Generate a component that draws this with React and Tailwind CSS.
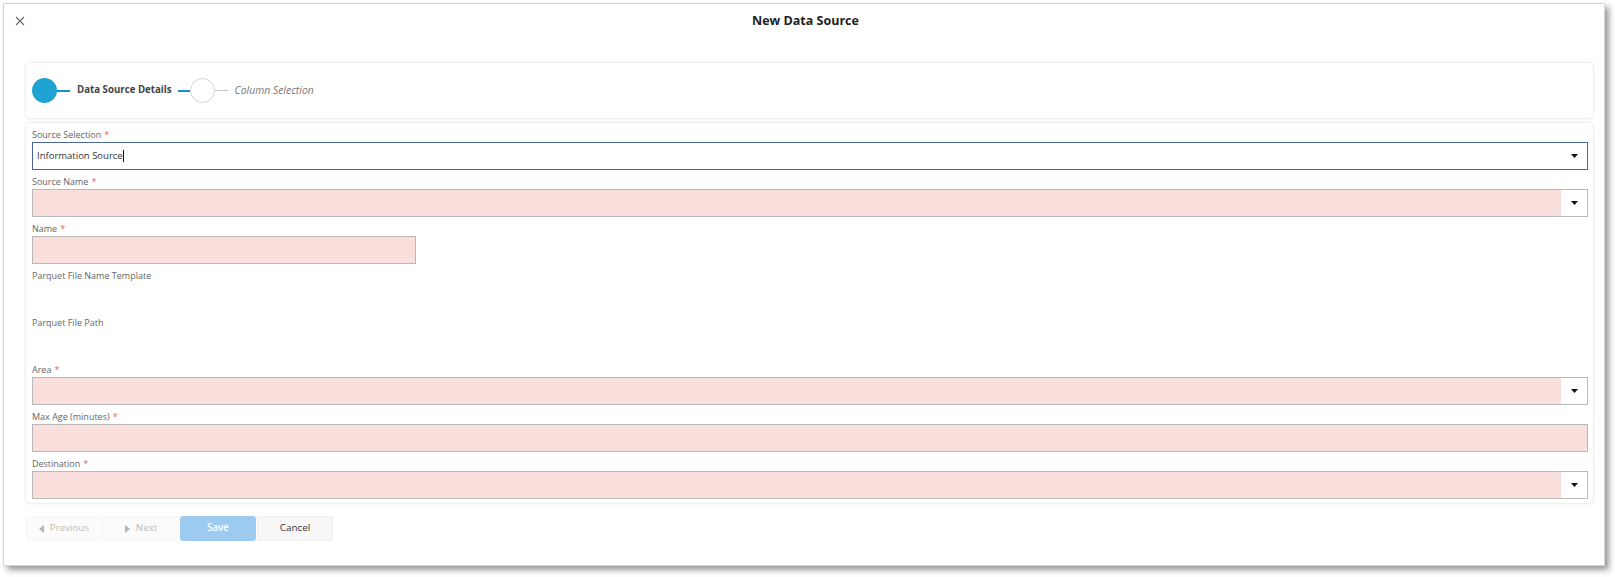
import React from 'react'

const Caret = () => (
  <svg width="7" height="4" viewBox="0 0 7 4">
    <path d="M0 0 L7 0 L3.5 4 Z" fill="#111" />
  </svg>
)

const Label = ({ text, required }) => (
  <div className="h-[15px] leading-[15px] text-[9px] text-[#666]">
    {text}
    {required && <span className="text-[#e8605a] ml-[3px]">*</span>}
  </div>
)

const PinkInput = ({ dropdown, width }) => (
  <div className={`h-[28px] flex border border-[#b9b9b9] bg-[#f9dfdc] mb-[4px] ${width || 'w-full'}`}>
    <div className="flex-1" />
    {dropdown && (
      <div className="w-[26px] bg-white flex items-center justify-center">
        <Caret />
      </div>
    )}
  </div>
)

const App = () => {
  return (
    <div className="w-[1615px] h-[577px] bg-white pt-[3px] pl-[3px]" style={{ fontFamily: '"Open Sans", "Liberation Sans", sans-serif' }}>
      <div className="w-[1602px] h-[563px] bg-white border border-[#d6d6d6] shadow-[4px_4px_6px_rgba(0,0,0,0.4)] flex flex-col">
        {/* Header */}
        <div className="relative h-[34px] flex items-center justify-center">
          <button className="absolute left-[11px] top-[12px] w-[10px] h-[10px]">
            <svg width="10" height="10" viewBox="0 0 10 10">
              <path d="M1 1 L9 9 M9 1 L1 9" stroke="#666" strokeWidth="1.1" />
            </svg>
          </button>
          <h1 className="text-[12.5px] font-bold text-[#222] ml-[3px]">New Data Source</h1>
        </div>

        <div className="pl-[22px] pr-[11px] mt-[25px]">
          {/* Stepper */}
          <div className="h-[55px] rounded-[4px] bg-white shadow-[0_0_3px_rgba(0,0,0,0.18)] flex items-center pl-[6px]">
            <div className="w-[25px] h-[25px] rounded-full bg-[#1fa3d3]" />
            <div className="w-[13px] h-[2px] bg-[#1b8ecf]" />
            <span className="ml-[7px] text-[9.7px] font-bold text-[#444]">Data Source Details</span>
            <div className="ml-[6px] w-[12px] h-[2px] bg-[#1b8ecf]" />
            <div className="w-[25px] h-[25px] rounded-full bg-white border border-[#d6d6d6]" />
            <div className="w-[13px] h-[1px] bg-[#c4c4c4]" />
            <span className="ml-[7px] text-[10.4px] italic text-[#777]">Column Selection</span>
          </div>

          {/* Form */}
          <div className="mt-[5px] h-[380px] rounded-[4px] bg-white shadow-[0_0_3px_rgba(0,0,0,0.18)] pt-[4px] pl-[6px] pr-[5px]">
            <Label text="Source Selection" required />
            <div className="h-[28px] flex items-center border border-[#4a6697] bg-white mb-[4px]">
              <div className="flex-1 flex items-center pl-[4px] text-[9.5px] text-[#333]">
                Information Source
                <span className="inline-block w-[1px] h-[12px] bg-[#111]" />
              </div>
              <div className="w-[26px] flex items-center justify-center">
                <Caret />
              </div>
            </div>

            <Label text="Source Name" required />
            <PinkInput dropdown />

            <Label text="Name" required />
            <PinkInput width="w-[384px]" />

            <Label text="Parquet File Name Template" />
            <div className="h-[28px] mb-[4px]" />

            <Label text="Parquet File Path" />
            <div className="h-[28px] mb-[4px]" />

            <Label text="Area" required />
            <PinkInput dropdown />

            <Label text="Max Age (minutes)" required />
            <PinkInput />

            <Label text="Destination" required />
            <PinkInput dropdown />
          </div>

          {/* Buttons */}
          <div className="mt-[13px] flex gap-[1px] text-[9.8px]">
            <button className="w-[76px] h-[25px] bg-[#fbfbfb] border border-[#f6f6f6] rounded-[2px] text-[#bdbdbd] flex items-center justify-center gap-[6px]">
              <svg width="5" height="8" viewBox="0 0 5 8"><path d="M5 0 L5 8 L0 4 Z" fill="#b5b5b5" /></svg>
              Previous
            </button>
            <button className="w-[76px] h-[25px] bg-[#fbfbfb] border border-[#f6f6f6] rounded-[2px] text-[#bdbdbd] flex items-center justify-center gap-[6px]">
              <svg width="5" height="8" viewBox="0 0 5 8"><path d="M0 0 L0 8 L5 4 Z" fill="#b5b5b5" /></svg>
              Next
            </button>
            <button className="w-[76px] h-[25px] bg-[#9dcbf0] rounded-[3px] text-white font-semibold">
              Save
            </button>
            <button className="w-[76px] h-[25px] bg-[#f7f7f7] border border-[#efefef] rounded-[2px] text-[#333]">
              Cancel
            </button>
          </div>
        </div>
      </div>
    </div>
  )
}

export default App
